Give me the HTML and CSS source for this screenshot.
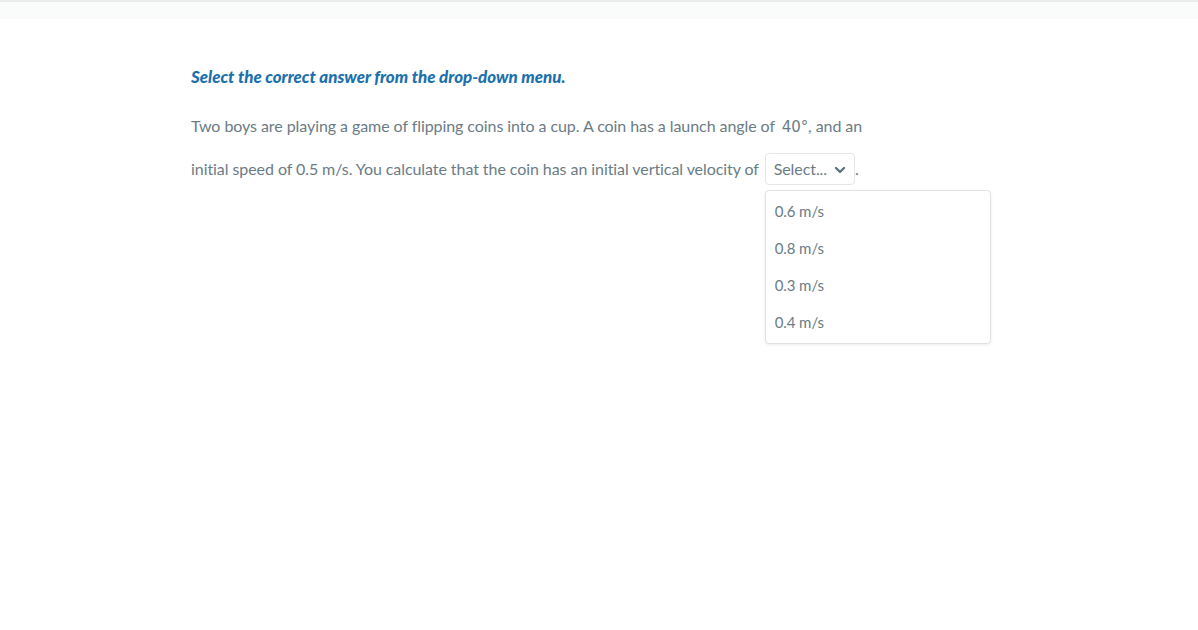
FILE: index.html
```html
<!DOCTYPE html>
<html>
<head>
<meta charset="utf-8">
<link rel="stylesheet" href="styles.css">
</head>
<body>
<div class="topbar"></div>
<main class="content">
  <div class="instruction">Select the correct answer from the drop-down menu.</div>
  <div class="question">Two boys are playing a game of flipping coins into a cup. A coin has a launch angle of <span class="math">40°</span>, and an initial speed of 0.5 m/s. You calculate that the coin has an initial vertical velocity of <div class="select-wrap"><div class="select">Select... <svg class="chev" width="12" height="12" viewBox="0 0 12 12"><path d="M2 4 L6 8 L10 4" fill="none" stroke="#5f7580" stroke-width="2.4" stroke-linecap="round" stroke-linejoin="round"/></svg></div><div class="dd-list"><div class="opt">0.6 m/s</div><div class="opt">0.8 m/s</div><div class="opt">0.3 m/s</div><div class="opt">0.4 m/s</div></div></div>.</div>
</main>
</body>
</html>
```
FILE: styles.css
```css
html, body {
  margin: 0;
  padding: 0;
  background: #fff;
}
body {
  font-family: Lato, "Noto Sans", sans-serif;
  color: #6b7c85;
  min-height: 630px;
}
.topbar {
  height: 17px;
  border-top: 2px solid #ebebeb;
  background: #fafcfb;
}
.content {
  padding: 47px 0 0 191px;
  width: 700px;
}
.instruction {
  margin: 0 0 18px 0;
  font-weight: 900;
  font-style: italic;
  font-size: 16.9px;
  color: #1b70ad;
}
.question {
  font-size: 16px;
  line-height: 42px;
  letter-spacing: -0.07px;
}
.math {
  font-family: "DejaVu Sans", sans-serif;
  font-size: 15px;
  padding-left: 3px;
}
.select-wrap {
  position: relative;
  display: inline-block;
  vertical-align: middle;
  margin-bottom: 4px;
  line-height: normal;
  margin-left: 2px;
}
.select {
  display: flex;
  align-items: center;
  gap: 7px;
  height: 32px;
  padding: 0 8px 0 8px;
  border: 1px solid #e6e6e6;
  border-radius: 4px;
  box-sizing: border-box;
}
.chev {
  margin-top: 3px;
}
.dd-list {
  position: absolute;
  left: 0;
  top: 37px;
  width: 226px;
  box-sizing: border-box;
  border: 1px solid #e2e2e2;
  border-radius: 4px;
  background: #fff;
  box-shadow: 0 1px 3px rgba(0,0,0,0.08);
  padding: 2px 0 2px 9px;
  z-index: 5;
}
.opt {
  height: 37px;
  line-height: 37px;
  font-size: 15px;
}
```
